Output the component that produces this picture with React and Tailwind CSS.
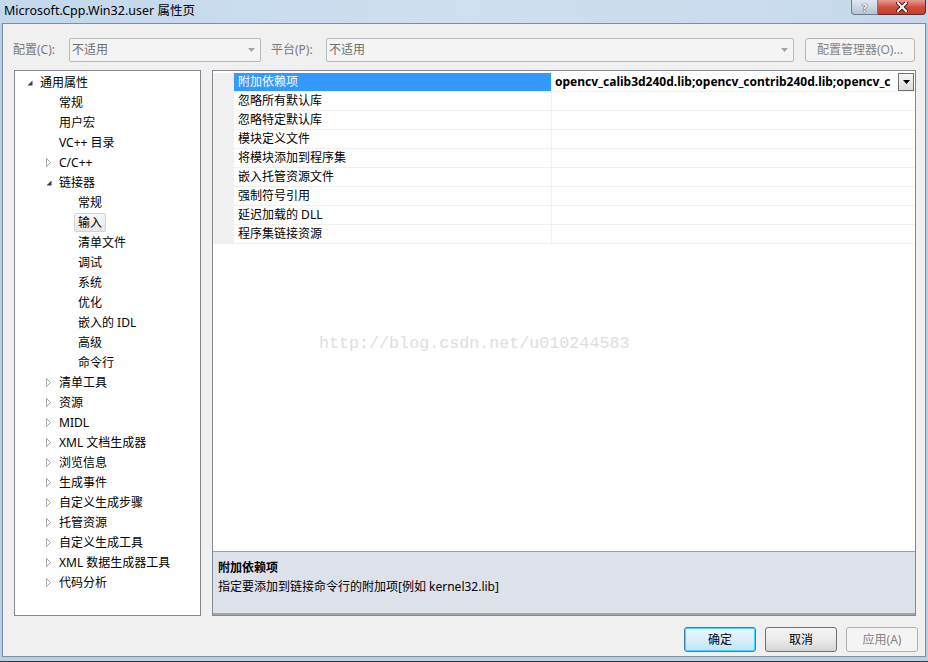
import React from 'react';

const tree = [
  { label: '通用属性', level: 0, arrow: 'open' },
  { label: '常规', level: 1 },
  { label: '用户宏', level: 1 },
  { label: 'VC++ 目录', level: 1 },
  { label: 'C/C++', level: 1, arrow: 'closed' },
  { label: '链接器', level: 1, arrow: 'open' },
  { label: '常规', level: 2 },
  { label: '输入', level: 2, selected: true },
  { label: '清单文件', level: 2 },
  { label: '调试', level: 2 },
  { label: '系统', level: 2 },
  { label: '优化', level: 2 },
  { label: '嵌入的 IDL', level: 2 },
  { label: '高级', level: 2 },
  { label: '命令行', level: 2 },
  { label: '清单工具', level: 1, arrow: 'closed' },
  { label: '资源', level: 1, arrow: 'closed' },
  { label: 'MIDL', level: 1, arrow: 'closed' },
  { label: 'XML 文档生成器', level: 1, arrow: 'closed' },
  { label: '浏览信息', level: 1, arrow: 'closed' },
  { label: '生成事件', level: 1, arrow: 'closed' },
  { label: '自定义生成步骤', level: 1, arrow: 'closed' },
  { label: '托管资源', level: 1, arrow: 'closed' },
  { label: '自定义生成工具', level: 1, arrow: 'closed' },
  { label: 'XML 数据生成器工具', level: 1, arrow: 'closed' },
  { label: '代码分析', level: 1, arrow: 'closed' },
];

const indent = { 0: 'pl-[11px]', 1: 'pl-[30px]', 2: 'pl-[49px]' };

const props = [
  '附加依赖项',
  '忽略所有默认库',
  '忽略特定默认库',
  '模块定义文件',
  '将模块添加到程序集',
  '嵌入托管资源文件',
  '强制符号引用',
  '延迟加载的 DLL',
  '程序集链接资源',
];

function Arrow({ kind }) {
  if (kind === 'open') {
    return (
      <svg width="14" height="20" viewBox="0 0 14 20">
        <path d="M1.5 13.5 L6.5 8.5 L6.5 13.5 Z" fill="#3c3c3c" />
      </svg>
    );
  }
  if (kind === 'closed') {
    return (
      <svg width="14" height="20" viewBox="0 0 14 20">
        <path d="M1.5 6.5 L5.5 10.5 L1.5 14.5 Z" fill="none" stroke="#a6a6a6" strokeWidth="1" />
      </svg>
    );
  }
  return <span className="w-[14px]" />;
}

function ComboArrow() {
  return (
    <svg width="7" height="4" viewBox="0 0 7 4">
      <path d="M0 0 L7 0 L3.5 4 Z" fill="#a3a3a3" />
    </svg>
  );
}

export default function App() {
  return (
    <div className="w-[928px] h-[662px] flex flex-col bg-[#b9cfe6] border-b border-[#2f3d4c] font-['Noto_Sans','Noto_Sans_CJK_SC',sans-serif] text-[12px] text-black">
      {/* title bar */}
      <div className="h-[23px] flex items-start bg-gradient-to-r from-[#c3d8ed] via-[#cfdfef] to-[#c6d9ec]">
        <div className="pl-[4px] pt-[2px] text-[12.5px] leading-[18px] text-black">Microsoft.Cpp.Win32.user 属性页</div>
        <div className="ml-auto mr-[2px] flex">
          <div className="w-[27px] h-[15px] rounded-bl-[4px] border border-t-0 border-[#6d7c8e] bg-gradient-to-b from-[#dfe8f1] to-[#b4c5d8] flex items-center justify-center text-[11px] leading-none font-bold text-white [text-shadow:0_0_1px_#333,0_0_1px_#333]">?</div>
          <div className="w-[48px] h-[15px] rounded-br-[4px] border border-t-0 border-l-0 border-[#5b2b25] bg-gradient-to-b from-[#e49c8f] via-[#cf4f3e] to-[#c6402c] flex items-center justify-center">
            <svg width="12" height="10" viewBox="0 0 12 10">
              <path d="M2 1 L10 9 M10 1 L2 9" stroke="#3a1a16" strokeWidth="4" strokeLinecap="square" />
              <path d="M2 1 L10 9 M10 1 L2 9" stroke="#ffffff" strokeWidth="2" strokeLinecap="square" />
            </svg>
          </div>
        </div>
      </div>

      <div className="flex-1 flex flex-col px-[2px] pb-[4px]">
        <div className="flex-1 flex flex-col bg-[#f0f0f0] border border-[#7d8ea3]">
          {/* configuration row */}
          <div className="flex items-center pl-[10px] pt-[14px] h-[38px] text-[#7a7a7a]">
            <div className="w-[56px]">配置(C):</div>
            <div className="w-[192px] h-[24px] border border-[#b9b9b9] rounded-[2px] bg-[#f4f4f4] flex items-center pl-[2px] pr-[5px]">
              <span className="flex-1 text-[#6d6d6d]">不适用</span>
              <ComboArrow />
            </div>
            <div className="ml-[10px] w-[55px]">平台(P):</div>
            <div className="w-[468px] h-[24px] border border-[#b9b9b9] rounded-[2px] bg-[#f4f4f4] flex items-center pl-[2px] pr-[5px]">
              <span className="flex-1 text-[#6d6d6d]">不适用</span>
              <ComboArrow />
            </div>
            <div className="ml-[11px] w-[110px] h-[24px] border border-[#b5b5b5] rounded-[3px] bg-[#f4f4f4] flex items-center justify-center text-[#838383]">配置管理器(O)...</div>
          </div>

          {/* panels */}
          <div className="flex pl-[11px] mt-[8px] h-[546px]">
            <div className="w-[187px] border border-[#828790] bg-white pt-[1px]">
              {tree.map((item, i) => (
                <div key={i} className={`h-[20px] flex items-center ${indent[item.level]}`}>
                  <Arrow kind={item.arrow} />
                  <span
                    className={`-ml-[4px] px-[3px] h-[19px] flex items-center leading-[17px] border rounded-[2px] whitespace-nowrap ${
                      item.selected ? 'border-[#d2d2d2] bg-gradient-to-b from-[#f7f7f7] to-[#e8e8e8]' : 'border-transparent'
                    }`}
                  >
                    {item.label}
                  </span>
                </div>
              ))}
            </div>

            <div className="ml-[11px] w-[704px] border border-[#828790] flex flex-col">
              <div className="relative flex-1 bg-white pt-[2px]">
                {props.map((name, i) => (
                  <div key={i} className="h-[19px] flex border-b border-[#f0f0f0]">
                    <div className="w-[21px] bg-[#f0f0f0]" />
                    <div
                      className={`w-[318px] border-r border-[#f0f0f0] pl-[4px] leading-[18px] ${
                        i === 0 ? 'bg-[#3399ff] text-white' : ''
                      }`}
                    >
                      {name}
                    </div>
                    <div className="flex-1 flex items-center overflow-hidden">
                      {i === 0 && (
                        <>
                          <span className="flex-1 pl-[3px] font-bold whitespace-nowrap overflow-hidden leading-[18px]">
                            opencv_calib3d240d.lib;opencv_contrib240d.lib;opencv_c
                          </span>
                          <div className="w-[16px] h-[18px] mr-[1px] border border-[#707070] bg-gradient-to-b from-[#f6f6f6] to-[#dcdcdc] flex items-center justify-center">
                            <svg width="7" height="4" viewBox="0 0 7 4">
                              <path d="M0 0 L7 0 L3.5 4 Z" fill="#000" />
                            </svg>
                          </div>
                        </>
                      )}
                    </div>
                  </div>
                ))}
                <div className="absolute left-[106px] top-[263px] font-['Liberation_Mono',monospace] text-[16.7px] leading-[20px] text-[#dedede] whitespace-nowrap">
                  http://blog.csdn.net/u010244583
                </div>
              </div>
              <div className="h-[64px] border-t border-[#a0a0a0] border-b-2 border-b-[#a5a5a5] bg-[#dde1e9] px-[5px] pt-[7px]">
                <div className="font-bold leading-[18px]">附加依赖项</div>
                <div className="leading-[18px] mt-[1px]">指定要添加到链接命令行的附加项[例如 kernel32.lib]</div>
              </div>
            </div>
          </div>

          {/* dialog buttons */}
          <div className="flex justify-end gap-[9px] mt-[11px] pr-[7px]">
            <div className="w-[72px] h-[25px] rounded-[3px] border border-[#3c7fb1] shadow-[inset_0_0_0_1px_#48d2ff] bg-gradient-to-b from-[#ecf7fd] via-[#d9effb] to-[#bde4f7] flex items-center justify-center">确定</div>
            <div className="w-[72px] h-[25px] rounded-[3px] border border-[#707070] bg-gradient-to-b from-[#f3f3f3] via-[#ebebeb] to-[#d5d5d5] flex items-center justify-center">取消</div>
            <div className="w-[72px] h-[25px] rounded-[3px] border border-[#adb2b5] bg-[#f4f4f4] flex items-center justify-center text-[#838383]">应用(A)</div>
          </div>
        </div>
      </div>
    </div>
  );
}
